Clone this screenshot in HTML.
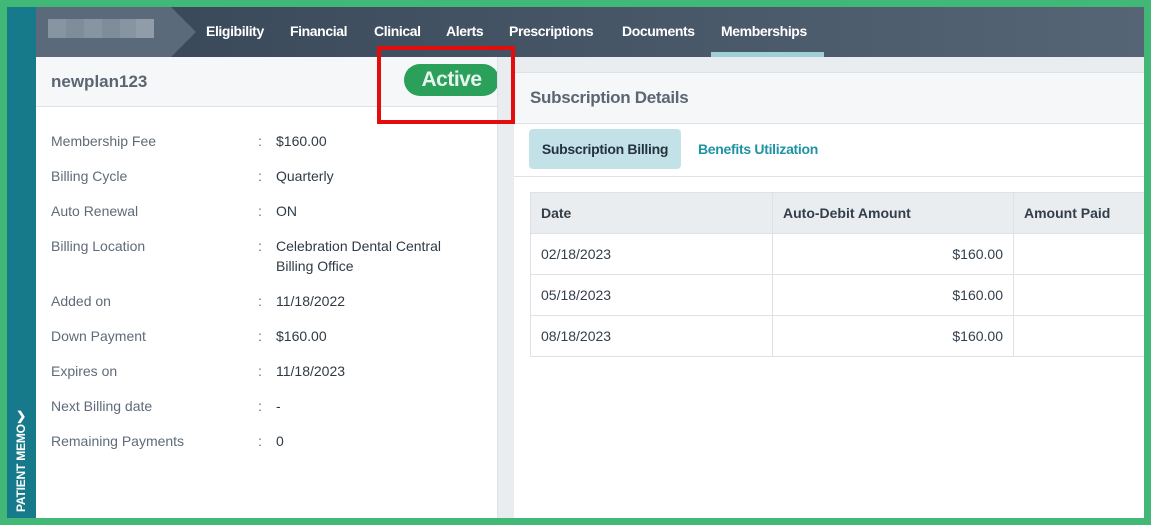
<!DOCTYPE html>
<html><head><meta charset="utf-8"><style>
*{margin:0;padding:0;box-sizing:border-box}
body{width:1151px;height:525px;overflow:hidden;background:#41b876;font-family:"Liberation Sans",sans-serif;position:relative}
.a{position:absolute}
.nav{left:36px;top:7px;width:1108px;height:50px;background:linear-gradient(90deg,#364656,#566575)}
.logo{left:36px;top:7px;width:135px;height:50px;background:#5b6a7a}
.arr{left:171px;top:7px;width:0;height:0;border-top:25px solid transparent;border-bottom:25px solid transparent;border-left:25px solid #5b6a7a}
.blur{left:48px;top:19px;width:106px;height:19px;background:#8795a2}
.ni{top:23px;color:#fff;font-weight:bold;font-size:14px;letter-spacing:-0.4px}
.lbl{left:51px;color:#5f6b78;font-size:14px}
.col{left:258px;color:#5f6b78;font-size:14px}
.val{left:276px;color:#2f3a45;font-size:14px;line-height:20px}
td,th{border:1px solid #dde2e7;font-size:14px;height:41px;padding:0 10px;color:#333e49}
th{background:#e9edf0;text-align:left;font-weight:bold}
</style></head><body>
<div class="a" style="left:7px;top:7px;width:29px;height:511px;background:#167a8a"></div>
<div class="a" style="left:14px;top:512px;transform:rotate(-90deg);transform-origin:0 0;color:#fff;font-weight:bold;font-size:12px;line-height:14px;white-space:nowrap;letter-spacing:-0.2px">PATIENT MEMO <span style="display:inline-block;transform:rotate(90deg)">❯</span></div>
<div class="a nav"></div>
<div class="a logo"></div><div class="a arr"></div><div class="a blur"></div>
<div class="a" style="left:66px;top:19px;width:18px;height:19px;background:#7f8d9a"></div>
<div class="a" style="left:102px;top:19px;width:18px;height:19px;background:#7f8d9a"></div>
<div class="a" style="left:136px;top:19px;width:18px;height:19px;background:#909ca8"></div>
<div class="a ni" style="left:206px">Eligibility</div>
<div class="a ni" style="left:290px">Financial</div>
<div class="a ni" style="left:374px">Clinical</div>
<div class="a ni" style="left:446px">Alerts</div>
<div class="a ni" style="left:509px">Prescriptions</div>
<div class="a ni" style="left:622px">Documents</div>
<div class="a ni" style="left:721px">Memberships</div>
<div class="a" style="left:711px;top:52px;width:113px;height:5px;background:#9fd0d8"></div>
<!-- left panel -->
<div class="a" style="left:36px;top:57px;width:461px;height:461px;background:#fff"></div>
<div class="a" style="left:36px;top:57px;width:461px;height:50px;background:#f6f7f9;border-bottom:1px solid #dfe3e7"></div>
<div class="a" style="left:51px;top:72px;font-size:17px;font-weight:bold;color:#5b6673">newplan123</div>
<div class="a" style="left:404px;top:64px;width:95px;height:32px;border-radius:16px;background:#2aa05a;color:#e8f5ec;font-size:21px;font-weight:bold;text-align:center;line-height:32px;letter-spacing:-0.5px">Active</div>
<div class="a lbl" style="top:133px">Membership Fee</div><div class="a col" style="top:133px">:</div><div class="a val" style="top:131px">$160.00</div>
<div class="a lbl" style="top:168px">Billing Cycle</div><div class="a col" style="top:168px">:</div><div class="a val" style="top:166px">Quarterly</div>
<div class="a lbl" style="top:203px">Auto Renewal</div><div class="a col" style="top:203px">:</div><div class="a val" style="top:201px">ON</div>
<div class="a lbl" style="top:238px">Billing Location</div><div class="a col" style="top:238px">:</div><div class="a val" style="top:236px">Celebration Dental Central<br>Billing Office</div>
<div class="a lbl" style="top:293px">Added on</div><div class="a col" style="top:293px">:</div><div class="a val" style="top:291px">11/18/2022</div>
<div class="a lbl" style="top:328px">Down Payment</div><div class="a col" style="top:328px">:</div><div class="a val" style="top:326px">$160.00</div>
<div class="a lbl" style="top:363px">Expires on</div><div class="a col" style="top:363px">:</div><div class="a val" style="top:361px">11/18/2023</div>
<div class="a lbl" style="top:398px">Next Billing date</div><div class="a col" style="top:398px">:</div><div class="a val" style="top:396px">-</div>
<div class="a lbl" style="top:433px">Remaining Payments</div><div class="a col" style="top:433px">:</div><div class="a val" style="top:431px">0</div>
<!-- separator / right background -->
<div class="a" style="left:497px;top:57px;width:647px;height:461px;background:#e9edf0;border-left:1px solid #dfe3e7"></div>
<!-- right panel -->
<div class="a" style="left:514px;top:72px;width:630px;height:446px;background:#fff"></div>
<div class="a" style="left:514px;top:72px;width:630px;height:52px;background:#f6f7f9;border-bottom:1px solid #dfe3e7;border-top:1px solid #dfe3e7"></div>
<div class="a" style="left:530px;top:88px;font-size:17px;font-weight:bold;color:#5b6673;letter-spacing:-0.3px">Subscription Details</div>
<div class="a" style="left:529px;top:129px;width:152px;height:40px;border-radius:4px;background:#c3e2e8;color:#253240;font-weight:bold;font-size:14px;line-height:40px;text-align:center;letter-spacing:-0.3px">Subscription Billing</div>
<div class="a" style="left:698px;top:141px;color:#1d93a5;font-weight:bold;font-size:14px;letter-spacing:-0.3px">Benefits Utilization</div>
<div class="a" style="left:514px;top:176px;width:630px;height:1px;background:#dfe3e7"></div>
<table class="a" style="left:530px;top:192px;width:640px;border-collapse:collapse">
<tr><th style="width:242px">Date</th><th style="width:241px">Auto-Debit Amount</th><th>Amount Paid</th></tr>
<tr><td>02/18/2023</td><td style="text-align:right">$160.00</td><td></td></tr>
<tr><td>05/18/2023</td><td style="text-align:right">$160.00</td><td></td></tr>
<tr><td>08/18/2023</td><td style="text-align:right">$160.00</td><td></td></tr>
</table>
<div class="a" style="left:1144px;top:0;width:7px;height:525px;background:#41b876"></div>
<div class="a" style="left:0;top:518px;width:1151px;height:7px;background:#41b876"></div>
<div class="a" style="left:377px;top:46px;width:138px;height:78px;border:4px solid #e30d0d"></div>
</body></html>
